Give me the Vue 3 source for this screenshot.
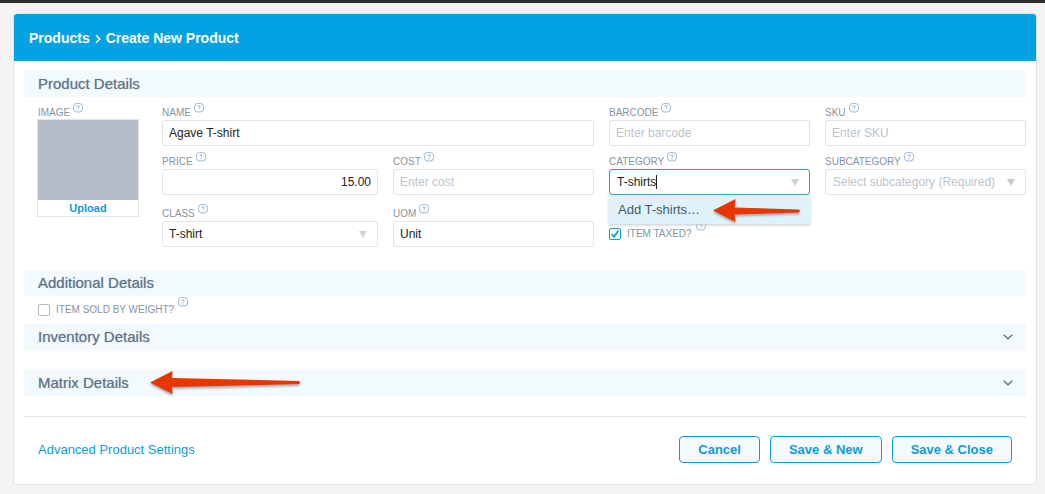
<script setup>
import { ref, h } from 'vue'

const name = ref('Agave T-shirt')
const price = ref('15.00')
const cost = ref('')
const barcode = ref('')
const sku = ref('')
const category = ref('T-shirts')
const subcategory = ref('')
const productClass = ref('T-shirt')
const uom = ref('Unit')
const taxed = ref(true)
const byWeight = ref(false)

const HelpIcon = () =>
  h('svg', { width: 10, height: 10, viewBox: '0 0 10 10', fill: 'none', 'aria-hidden': 'true' }, [
    h('rect', { x: 0.5, y: 0.5, width: 9, height: 8.5, rx: 3.2, stroke: '#8fb0cb', 'stroke-width': 0.9 }),
    h('path', { d: 'M3.8 3.8C3.8 2.3 6.2 2.3 6.2 3.8C6.2 4.7 5 4.6 5 5.6M5 6.6V7.4', stroke: '#7fa6c6', 'stroke-width': 0.9 })
  ])
</script>

<template>
  <div class="page">
    <main class="card">
      <header class="title">
        <a href="#">Products</a>
        <svg class="crumb" width="6" height="10" viewBox="0 0 6 10" fill="none">
          <path d="M1 1.2L4.8 5L1 8.8" stroke="#fff" stroke-width="1.5" />
        </svg>
        <h1>Create New Product</h1>
      </header>

      <form class="body" @submit.prevent>
        <h2 class="section">Product Details</h2>

        <div class="details">
          <div class="field">
            <div class="label"><span>IMAGE</span><button type="button" class="help" aria-label="Help"><HelpIcon /></button></div>
            <div class="image">
              <div class="preview"></div>
              <button type="button" class="upload">Upload</button>
            </div>
          </div>

          <div class="grid">
            <div class="field wide">
              <div class="label"><label for="name">NAME</label><button type="button" class="help" aria-label="Help"><HelpIcon /></button></div>
              <input id="name" v-model="name" class="control" type="text" />
            </div>
            <div class="field">
              <div class="label"><label for="barcode">BARCODE</label><button type="button" class="help" aria-label="Help"><HelpIcon /></button></div>
              <input id="barcode" v-model="barcode" class="control" type="text" placeholder="Enter barcode" />
            </div>
            <div class="field">
              <div class="label"><label for="sku">SKU</label><button type="button" class="help" aria-label="Help"><HelpIcon /></button></div>
              <input id="sku" v-model="sku" class="control" type="text" placeholder="Enter SKU" />
            </div>

            <div class="field">
              <div class="label"><label for="price">PRICE</label><button type="button" class="help" aria-label="Help"><HelpIcon /></button></div>
              <input id="price" v-model="price" class="control amount" type="text" />
            </div>
            <div class="field">
              <div class="label"><label for="cost">COST</label><button type="button" class="help" aria-label="Help"><HelpIcon /></button></div>
              <input id="cost" v-model="cost" class="control" type="text" placeholder="Enter cost" />
            </div>
            <div class="field">
              <div class="label"><label for="category">CATEGORY</label><button type="button" class="help" aria-label="Help"><HelpIcon /></button></div>
              <div class="combo">
                <input id="category" v-model="category" class="control active" type="text" role="combobox" aria-expanded="true" aria-controls="category-menu" />
                <span class="caret"></span>
                <svg class="triangle" width="8" height="7" viewBox="0 0 8 7"><path d="M0 0H8L4 7Z" /></svg>
                <div id="category-menu" class="menu" role="listbox">
                  <button type="button" class="option" role="option">Add T-shirts…</button>
                  <svg class="arrow" width="92" height="28" viewBox="0 0 92 28">
                    <path d="M1 12.5L23.5 1L22.5 9.5L87 11.5Q88.5 13 87 14.5L22.5 16.5L23.5 24Z" />
                  </svg>
                </div>
              </div>
            </div>
            <div class="field">
              <div class="label"><label for="subcategory">SUBCATEGORY</label><button type="button" class="help" aria-label="Help"><HelpIcon /></button></div>
              <div class="combo">
                <select id="subcategory" v-model="subcategory" class="control empty">
                  <option value="">Select subcategory (Required)</option>
                </select>
                <svg class="triangle dark" width="8" height="7" viewBox="0 0 8 7"><path d="M0 0H8L4 7Z" /></svg>
              </div>
            </div>

            <div class="field last">
              <div class="label"><label for="class">CLASS</label><button type="button" class="help" aria-label="Help"><HelpIcon /></button></div>
              <div class="combo">
                <select id="class" v-model="productClass" class="control">
                  <option>T-shirt</option>
                </select>
                <svg class="triangle" width="8" height="7" viewBox="0 0 8 7"><path d="M0 0H8L4 7Z" /></svg>
              </div>
            </div>
            <div class="field last">
              <div class="label"><label for="uom">UOM</label><button type="button" class="help" aria-label="Help"><HelpIcon /></button></div>
              <input id="uom" v-model="uom" class="control" type="text" />
            </div>
            <div class="check taxed">
              <input id="taxed" v-model="taxed" type="checkbox" />
              <label for="taxed">ITEM TAXED?</label>
              <button type="button" class="help" aria-label="Help"><HelpIcon /></button>
            </div>
          </div>
        </div>

        <h2 class="section">Additional Details</h2>
        <div class="check weight">
          <input id="weight" v-model="byWeight" type="checkbox" />
          <label for="weight">ITEM SOLD BY WEIGHT?</label>
          <button type="button" class="help" aria-label="Help"><HelpIcon /></button>
        </div>

        <button type="button" class="section toggle" aria-expanded="false">
          <span>Inventory Details</span>
          <svg width="10" height="6" viewBox="0 0 10 6" fill="none"><path d="M0.7 0.7L5 4.8L9.3 0.7" stroke="#5f7388" stroke-width="1.4" /></svg>
        </button>
        <button type="button" class="section toggle matrix" aria-expanded="false">
          <span>Matrix Details</span>
          <svg width="10" height="6" viewBox="0 0 10 6" fill="none"><path d="M0.7 0.7L5 4.8L9.3 0.7" stroke="#5f7388" stroke-width="1.4" /></svg>
          <svg class="arrow" width="156" height="28" viewBox="0 0 156 28">
            <path d="M0 12.5L22.5 1L22 8L149 11Q151 12.5 149 14L22 17L22.5 24Z" />
          </svg>
        </button>

        <footer class="footer">
          <a href="#">Advanced Product Settings</a>
          <div class="actions">
            <button type="button" class="action">Cancel</button>
            <button type="submit" class="action">Save &amp; New</button>
            <button type="submit" class="action">Save &amp; Close</button>
          </div>
        </footer>
      </form>
    </main>
  </div>
</template>

<style>
body {
  background: #f4f4f4;
}
</style>

<style scoped>
.page,
.page * {
  box-sizing: border-box;
}
.page {
  border-top: 3px solid #2d2d2d;
  padding: 11px 9px 10px 14px;
  color: #222;
  font-family: "Liberation Sans", Arial, sans-serif;
  font-size: 12px;
}
button,
input,
select {
  font-family: inherit;
  margin: 0;
}
button {
  border: 0;
  background: none;
  padding: 0;
  cursor: pointer;
}
a {
  color: #109bd0;
  text-decoration: none;
}
.card {
  background: #fff;
  border-radius: 3px;
  box-shadow: 0 0 0 1px #e4e4e4;
}
.title {
  display: flex;
  align-items: center;
  padding: 15px 15px 14px;
  border-radius: 3px 3px 0 0;
  background: #05a2e3;
  color: #fff;
  font-size: 14px;
  line-height: 18px;
  font-weight: 700;
}
.title a {
  color: #fff;
}
.title h1 {
  margin: 0;
  font-size: 14px;
}
.crumb {
  margin: 1px 5px 0;
}
.body {
  padding: 10px 10px 21px;
}
.section {
  display: flex;
  align-items: center;
  width: 100%;
  margin: 0;
  padding: 0 13px 0 14px;
  background: #f2fafd;
  color: #5f7388;
  font-size: 15px;
  line-height: 26px;
  font-weight: 400;
  text-shadow: 0 0 1px #5f738899;
}
.toggle {
  position: relative;
  justify-content: space-between;
}
.matrix {
  margin-top: 20px;
}
.details {
  display: grid;
  grid-template-columns: 101px 1fr;
  column-gap: 23px;
  padding-left: 14px;
  margin-bottom: 23px;
}
.grid {
  display: grid;
  grid-template-columns: 216fr 201fr 201fr 201fr;
  column-gap: 15px;
}
.field {
  min-width: 0;
}
.wide {
  grid-column: span 2;
}
.label {
  display: flex;
  gap: 3px;
  padding-top: 6px;
  height: 23px;
  color: #8593a3;
  font-size: 10px;
  line-height: 19px;
}
.help {
  display: flex;
  width: 10px;
  height: 10px;
}
.last {
  padding-top: 3px;
}
.control {
  display: block;
  width: 100%;
  height: 26px;
  padding: 0 6px;
  border: 1px solid #e2e3e5;
  border-radius: 3px;
  background: #fff;
  color: #222;
  font-size: 12px;
  appearance: none;
  outline: none;
}
.control::placeholder {
  color: #bcc3cc;
  opacity: 1;
}
.control.amount {
  text-align: right;
}
.control.empty {
  color: #bcc3cc;
  padding: 0 7px;
}
.control.active {
  border-color: #259cba;
  padding: 0 7px;
}
.combo {
  position: relative;
}
.triangle {
  position: absolute;
  right: 11px;
  top: 10px;
  fill: #d2d2d2;
  pointer-events: none;
}
.triangle.dark {
  fill: #c4c8cd;
}
.caret {
  position: absolute;
  left: 47px;
  top: 6px;
  width: 1px;
  height: 14px;
  background: #222;
}
.menu {
  position: absolute;
  z-index: 2;
  top: 26px;
  left: 0;
  right: 0;
  background: #dff2f9;
  box-shadow: 0 1px 3px #bcc8ce;
}
.option {
  display: block;
  width: 100%;
  padding: 0 9px;
  color: #43596a;
  font-size: 13px;
  line-height: 29px;
  text-align: left;
}
.arrow {
  position: absolute;
  fill: #e83502;
  filter: drop-shadow(0 2px 1px #a9a9a9);
  pointer-events: none;
}
.menu .arrow {
  left: 103px;
  top: 3px;
}
.matrix .arrow {
  left: 126px;
  top: 0;
}
.image {
  margin: -1px 0 0 -1px;
  border: 1px solid #e2e3e5;
}
.preview {
  height: 80px;
  background: #b5bdca;
}
.upload {
  display: block;
  width: 100%;
  color: #109bd0;
  font-size: 11px;
  line-height: 16px;
  font-weight: 700;
}
.check {
  display: flex;
  align-items: center;
  color: #8593a3;
  font-size: 10px;
  line-height: 14px;
}
.check input {
  appearance: none;
  width: 12px;
  height: 12px;
  margin-right: 6px;
  border: 1px solid #b3b9c0;
  border-radius: 2px;
  background: #fff;
}
.check input:checked {
  border-color: #109bd0;
  background: url("data:image/svg+xml,%3Csvg xmlns='http://www.w3.org/2000/svg' viewBox='0 0 10 10' fill='none'%3E%3Cpath d='M1.6 5.2L4 7.8L8.4 1.6' stroke='%23109bd0' stroke-width='1.7'/%3E%3C/svg%3E");
}
.taxed {
  align-self: end;
  padding-bottom: 6px;
}
.check .help {
  align-self: flex-start;
  margin-left: 4px;
}
.taxed .help {
  margin-top: -6px;
}
.weight {
  height: 28px;
  padding-left: 14px;
}
.weight .help {
  margin-top: 1px;
}
.footer {
  display: flex;
  justify-content: space-between;
  align-items: center;
  margin-top: 20px;
  padding: 19px 14px 0;
  border-top: 1px solid #e4e5e6;
  font-size: 13px;
}
.actions {
  display: flex;
  gap: 10px;
}
.action {
  padding: 0 18px;
  border: 1px solid #109bd0;
  border-radius: 4px;
  background: #f2fafd;
  color: #109bd0;
  font-size: 13px;
  line-height: 25px;
  font-weight: 700;
}
</style>
